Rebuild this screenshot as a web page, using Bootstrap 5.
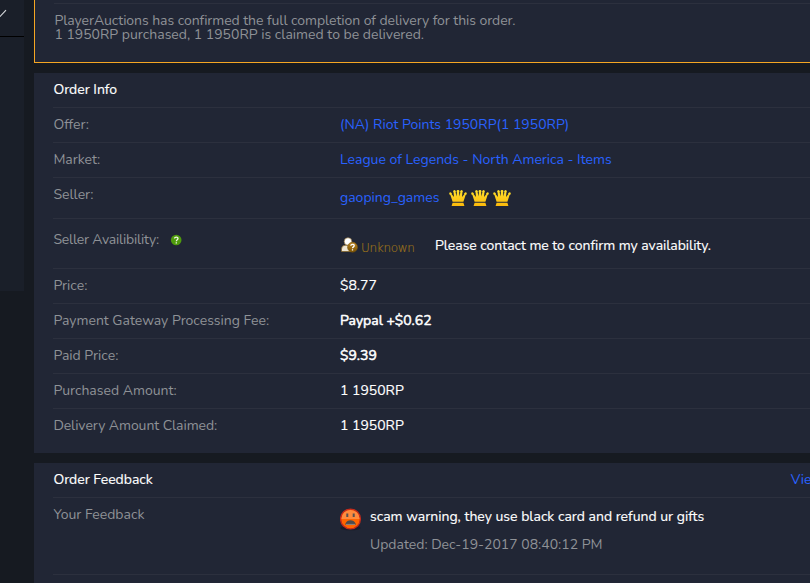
<!DOCTYPE html>
<html lang="en">
<head>
<meta charset="utf-8">
<meta name="viewport" content="width=device-width, initial-scale=1">
<title>Order details</title>
<link href="https://cdn.jsdelivr.net/npm/bootstrap@5.3.0/dist/css/bootstrap.min.css" rel="stylesheet">
<style>
body{background:#161a21;color:#8f9297;font:14px/20px Nunito,Lato,"Open Sans",sans-serif;height:583px;overflow:hidden}
.side{width:24px;height:291px;background:#1a1f29;flex:none}
.side-top{height:37px;border-bottom:1px solid #000;padding-top:9px}
.main{margin-left:10px;flex:1;min-width:0}
svg{display:block;flex:none}
.panel{background:#212635;padding-left:19px;margin-bottom:10px}
.notice{border:1px solid #f5a623;border-top:0;border-right:0;height:63px;line-height:14px;padding-top:3px}
.notice-line{border-top:1px solid #2c303e;padding:10px 0 0 .4px}
.line{height:35px;border-bottom:1px solid #2c303e;padding-top:7px;display:flex;white-space:nowrap}
.info .line:last-child{height:44px;border:0}
.name{width:287px;flex:none;padding-left:.4px;display:flex}
.ttl,.val{color:#fff;-webkit-text-stroke:.15px #fff}
.ttl{padding-left:.4px}
.ttl a{-webkit-text-stroke:0}
.val.heavy{-webkit-text-stroke:.5px #fff}
a{color:#2962ff;text-decoration:none}
.seller-line{height:41px}
.seller{padding-top:3px}
.avail-line{height:50px;padding-top:11px}
.avail-text{padding-top:6px;letter-spacing:-.04px}
.help{margin:4px 0 0 11px}
.person{margin:7px 0 0 1px}
.feedback{height:120px;overflow:hidden}
.feed-line{height:77px}
.face{margin-top:3px}
.review{margin:2px 0 0 8px}
.crowns{margin:2px 0 0 10px;gap:4px}
.unknown{font:200 12px/16px "DejaVu Sans",sans-serif;-webkit-text-stroke:.2px #98701c;color:#98701c;letter-spacing:-.3px;width:74px;margin:10px 0 0 2px}
.tight{letter-spacing:-.065px}
.tighter{letter-spacing:-.2px}
.view-link{margin-left:638px}
</style>
</head>
<body>
<svg width="0" height="0" class="position-absolute"><defs>
<linearGradient id="gold" x2="0" y2="1"><stop stop-color="#ffe12d"/><stop offset="1" stop-color="#fbb90b"/></linearGradient>
<linearGradient id="bronze" x2="0" y2="1"><stop stop-color="#bd8928"/><stop offset="1" stop-color="#795000"/></linearGradient>
<symbol id="crown" viewBox="0 0 18 17"><path d="M3.6 11.8 1.4 5A1.3 1.3 0 1 1 2.7 4.2L5 7 4.6 2.4A1.3 1.3 0 1 1 6.6 2.2L7.6 6.5 7.9 2.2A1.4 1.4 0 1 1 10.1 2.2L10.4 6.5 11.4 2.2A1.3 1.3 0 1 1 13.4 2.4L13 7 15.3 4.2A1.3 1.3 0 1 1 16.6 5L14.4 11.8ZM3.6 12.7H14.4L15.4 16H2.6Z" fill="url(#gold)"/></symbol>
</defs></svg>
<div class="d-flex align-items-start">
<aside class="side"><div class="side-top"><svg width="8" height="9" viewBox="0 0 8 9"><path d="M-1 7.5H0L6 1.2" fill="none" stroke="#d4d6da" stroke-width="1.2"/></svg></div></aside>
<main class="main">
<section class="panel notice"><div class="notice-line"><div class="tight">PlayerAuctions has confirmed the full completion of delivery for this order.</div><div>1 1950RP purchased, 1 1950RP is claimed to be delivered.</div></div></section>
<section class="panel info">
<div class="line ttl">Order Info</div>
<div class="line"><div class="name">Offer:</div><a href="#">(NA) Riot Points 1950RP(1 1950RP)</a></div>
<div class="line"><div class="name">Market:</div><a href="#">League of Legends - North America - Items</a></div>
<div class="line seller-line"><div class="name">Seller:</div><div class="d-flex seller"><a href="#">gaoping_games</a><div class="d-flex crowns"><svg width="18" height="17"><use href="#crown"/></svg><svg width="18" height="17"><use href="#crown"/></svg><svg width="18" height="17"><use href="#crown"/></svg></div></div></div>
<div class="line avail-line"><div class="name"><span class="tighter">Seller Availibility:</span><svg class="help" width="13" height="13" viewBox="0 0 13 13"><circle cx="6.2" cy="6" r="5.3" fill="#4f9b0d"/><path d="M4.5 4.6C4.5 2.6 8.2 2.6 8 4.6 7.9 5.8 6.4 5.7 6.3 7.2M6.3 8.2V9.5" stroke="#f2f7e8" stroke-width="1.3" fill="none"/></svg></div>
<svg class="person" width="18" height="17" viewBox="0 0 18 17"><path d="M.5 14.5V12Q.5 8.5 4 8.2H8Q11 9 11 14.5Z" fill="#eee6d5" stroke="#806020" stroke-width=".7"/><circle cx="7" cy="4.5" r="3.8" fill="#fff" stroke="#937744" stroke-width=".7"/><circle cx="11.5" cy="10.2" r="5" fill="url(#bronze)" stroke="#795711" stroke-width=".5"/><path d="M9.8 8.7C9.8 6.8 13.3 6.8 13.2 8.7 13.1 10 11.6 9.8 11.5 11.3M11.5 12.2V13.5" stroke="#fff" stroke-width="1.3" fill="none"/></svg>
<span class="unknown">Unknown</span><span class="val avail-text">Please contact me to confirm my availability.</span></div>
<div class="line"><div class="name">Price:</div><span class="val">$8.77</span></div>
<div class="line"><div class="name">Payment Gateway Processing Fee:</div><span class="val heavy">Paypal +$0.62</span></div>
<div class="line"><div class="name">Paid Price:</div><span class="val heavy">$9.39</span></div>
<div class="line"><div class="name">Purchased Amount:</div><span class="val">1 1950RP</span></div>
<div class="line"><div class="name tight">Delivery Amount Claimed:</div><span class="val">1 1950RP</span></div>
</section>
<section class="panel feedback">
<div class="line ttl">Order Feedback<a class="view-link" href="#">Vie</a></div>
<div class="line feed-line"><div class="name">Your Feedback</div>
<svg class="face" width="22" height="24" viewBox="0 0 22 24"><ellipse cx="10.5" cy="20" rx="10" ry="2.3" fill="#191c2b"/><circle cx="10.5" cy="11" r="9.9" fill="#ff6500" stroke="#c42b1c" stroke-width="1.4"/><path d="M1.4 11A9.1 9.1 0 0 1 19.6 11Z" fill="#ff8a3d"/><path d="M7.3 5.5V9M13.7 5.5V9" stroke="#575150" stroke-width="2"/><path d="M5.5 17V15.4Q7 12.2 10.5 12.2T15.5 15.4V17Z" fill="#4d4b4d"/><path d="M6 16.4H15" stroke="#99877d"/></svg>
<div class="review"><div class="val">scam warning, they use black card and refund ur gifts</div><div class="mt-2">Updated: Dec-19-2017 08:40:12 PM</div></div></div>
</section>
</main></div>
<script src="https://cdn.jsdelivr.net/npm/bootstrap@5.3.0/dist/js/bootstrap.bundle.min.js"></script>
</body>
</html>
